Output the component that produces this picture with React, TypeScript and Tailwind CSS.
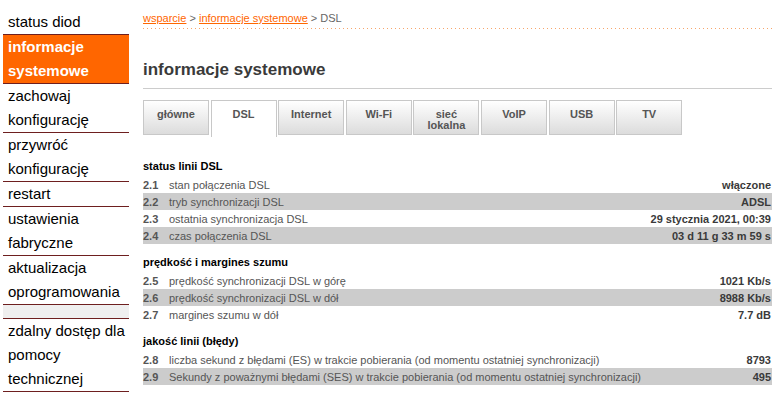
import React from 'react';

type SideItem = { lines?: string[]; active?: boolean; spacer?: boolean };

const sideItems: SideItem[] = [
  { lines: ['status diod'] },
  { lines: ['informacje', 'systemowe'], active: true },
  { lines: ['zachowaj', 'konfigurację'] },
  { lines: ['przywróć', 'konfigurację'] },
  { lines: ['restart'] },
  { lines: ['ustawienia', 'fabryczne'] },
  { lines: ['aktualizacja', 'oprogramowania'] },
  { spacer: true },
  { lines: ['zdalny dostęp dla', 'pomocy', 'technicznej'] },
];

const tabs = [
  { label: ['główne'] },
  { label: ['DSL'], active: true },
  { label: ['Internet'] },
  { label: ['Wi-Fi'] },
  { label: ['sieć', 'lokalna'] },
  { label: ['VoIP'] },
  { label: ['USB'] },
  { label: ['TV'] },
];

type Row = { no: string; label: string; value: string };

const sections: { title: string; rows: Row[] }[] = [
  {
    title: 'status linii DSL',
    rows: [
      { no: '2.1', label: 'stan połączenia DSL', value: 'włączone' },
      { no: '2.2', label: 'tryb synchronizacji DSL', value: 'ADSL' },
      { no: '2.3', label: 'ostatnia synchronizacja DSL', value: '29 stycznia 2021, 00:39' },
      { no: '2.4', label: 'czas połączenia DSL', value: '03 d 11 g 33 m 59 s' },
    ],
  },
  {
    title: 'prędkość i margines szumu',
    rows: [
      { no: '2.5', label: 'prędkość synchronizacji DSL w górę', value: '1021 Kb/s' },
      { no: '2.6', label: 'prędkość synchronizacji DSL w dół', value: '8988 Kb/s' },
      { no: '2.7', label: 'margines szumu w dół', value: '7.7 dB' },
    ],
  },
  {
    title: 'jakość linii (błędy)',
    rows: [
      { no: '2.8', label: 'liczba sekund z błędami (ES) w trakcie pobierania (od momentu ostatniej synchronizacji)', value: '8793' },
      { no: '2.9', label: 'Sekundy z poważnymi błędami (SES) w trakcie pobierania (od momentu ostatniej synchronizacji)', value: '495' },
    ],
  },
];

function Sidebar() {
  return (
    <div className="ml-[3px] w-[126px] shrink-0 pt-[10px]">
      {sideItems.map((item, i) =>
        item.spacer ? (
          <div key={i} className="h-[14px] bg-[#efefef] border-b border-[#6e1f1f]" />
        ) : (
          <div
            key={i}
            className={
              item.active
                ? 'border-b border-[#6e1f1f] bg-[#ff6600] px-[5px] text-[15px] leading-[24px] font-bold text-white'
                : 'border-b border-[#6e1f1f] px-[5px] text-[15px] leading-[24px] text-black'
            }
          >
            {item.lines!.map((l) => (
              <div key={l} className="whitespace-nowrap">{l}</div>
            ))}
          </div>
        )
      )}
    </div>
  );
}

export default function App() {
  return (
    <div className="flex w-[784px] h-[406px] overflow-hidden bg-white font-['Liberation_Sans',Arial,sans-serif]">
      <Sidebar />
      <div className="ml-[14px] mr-[12px] flex-1">
        {/* breadcrumb */}
        <div className="pt-[11px] text-[11px] leading-[14px] text-[#666]">
          <span className="text-[#ff6600] underline">wsparcie</span>
          {' > '}
          <span className="text-[#ff6600] underline">informacje systemowe</span>
          {' > DSL'}
        </div>
        <div className="mt-[3px] h-px bg-[linear-gradient(to_right,#f7a56b_1px,transparent_1px)] bg-[length:4px_1px] bg-repeat-x" />

        <h1 className="mt-[31px] pb-[8px] border-b border-[#cccccc] text-[17px] leading-[20px] font-bold text-[#3a3a3a]">
          informacje systemowe
        </h1>

        {/* tabs */}
        <div className="mt-[11px] flex items-start gap-[1.6px] h-[35px]">
          {tabs.map((t) => (
            <div
              key={t.label.join(' ')}
              className={
                t.active
                  ? 'w-[66px] h-[37px] border border-b-0 border-[#c8c8c8] bg-white pt-[8px] text-center text-[11px] leading-[11px] font-bold text-[#555]'
                  : 'w-[66px] h-[35px] border border-[#c8c8c8] bg-linear-to-b from-white to-[#dcdcdc] pt-[8px] text-center text-[11px] leading-[11px] font-bold text-[#555]'
              }
            >
              {t.label.map((l) => (
                <div key={l}>{l}</div>
              ))}
            </div>
          ))}
        </div>

        {/* sections */}
        <div className="mt-[25px]">
          {sections.map((s) => (
            <div key={s.title}>
              <div className="mt-[12px] mb-[3px] text-[11px] leading-[13px] font-bold text-black">{s.title}</div>
              {s.rows.map((r, i) => (
                <div
                  key={r.no}
                  className={
                    i % 2 === 1
                      ? 'flex h-[17px] items-center bg-[#cccccc] text-[11px] leading-[16px] text-[#555]'
                      : 'flex h-[17px] items-center text-[11px] leading-[16px] text-[#555]'
                  }
                >
                  <span className="w-[26px] shrink-0 font-bold">{r.no}</span>
                  <span className="whitespace-nowrap">{r.label}</span>
                  <span className="ml-auto pr-[1px] whitespace-nowrap font-bold text-[#3a3a3a]">{r.value}</span>
                </div>
              ))}
            </div>
          ))}
        </div>
      </div>
    </div>
  );
}
